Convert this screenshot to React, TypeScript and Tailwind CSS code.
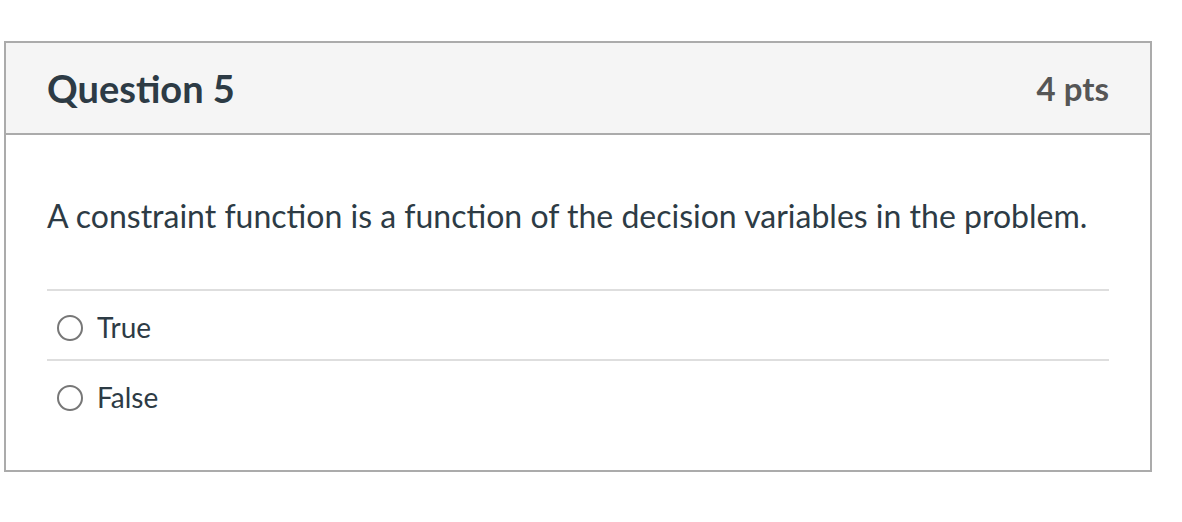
export default function App() {
  return (
    <div className="min-h-screen bg-white pt-[41px] pl-[4px] font-['Lato','Liberation_Sans',sans-serif] text-[#2d3b45]">
      <div className="w-[1148px] border-2 border-[#ababab]">
        <div className="h-[92px] px-[41px] flex items-center justify-between bg-[#f5f5f5] border-b-2 border-[#ababab]">
          <h2 className="text-[38px] font-bold leading-none">Question 5</h2>
          <div className="text-[33px] font-bold leading-none text-[#565656]">4 pts</div>
        </div>
        <div className="px-[41px] pt-[62px] pb-[41px]">
          <p className="text-[32px] leading-[1.2]">
            A constraint function is a function of the decision variables in the problem.
          </p>
          <div className="mt-[54px]">
            {['True', 'False'].map((a) => (
              <label key={a} className="h-[70px] pt-[5px] flex items-center border-t-2 border-[#dedede]">
                <span className="ml-[10px] w-[26px] h-[26px] rounded-full border-2 border-[#777]" />
                <span className="ml-[14px] text-[28px] leading-[1.2]">{a}</span>
              </label>
            ))}
          </div>
        </div>
      </div>
    </div>
  );
}
